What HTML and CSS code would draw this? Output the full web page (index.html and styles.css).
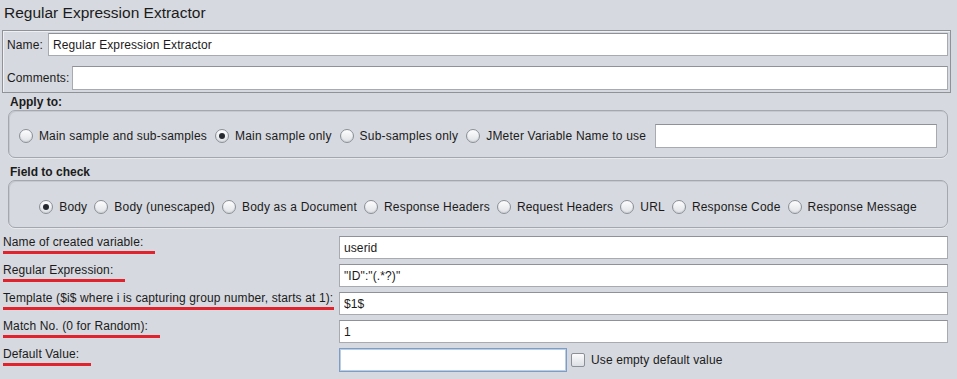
FILE: index.html
```html
<!DOCTYPE html>
<html lang="en">
<head>
    <meta charset="UTF-8">
    <title>Regular Expression Extractor</title>
    <link rel="stylesheet" href="styles.css">
</head>
<body>
    <div class="title">Regular Expression Extractor</div>

    <!-- Name / comments box -->
    <div class="name-box">
        <div class="field-row">
            <label class="name-label">Name:</label>
            <input class="text-input" type="text" value="Regular Expression Extractor">
        </div>
        <div class="field-row comments-row">
            <label class="comments-label">Comments:</label>
            <input class="text-input" type="text">
        </div>
    </div>

    <!-- Apply to -->
    <div class="group-title">Apply to:</div>
    <div class="group-panel apply-panel">
        <span class="radio-item"><span class="radio"></span>Main sample and sub-samples</span>
        <span class="radio-item"><span class="radio checked"></span>Main sample only</span>
        <span class="radio-item"><span class="radio"></span>Sub-samples only</span>
        <span class="radio-item"><span class="radio"></span>JMeter Variable Name to use</span>
        <input class="text-input var-input" type="text">
    </div>

    <!-- Field to check -->
    <div class="group-title field-title">Field to check</div>
    <div class="group-panel field-panel">
        <span class="radio-item"><span class="radio checked"></span>Body</span>
        <span class="radio-item"><span class="radio"></span>Body (unescaped)</span>
        <span class="radio-item"><span class="radio"></span>Body as a Document</span>
        <span class="radio-item"><span class="radio"></span>Response Headers</span>
        <span class="radio-item"><span class="radio"></span>Request Headers</span>
        <span class="radio-item"><span class="radio"></span>URL</span>
        <span class="radio-item"><span class="radio"></span>Response Code</span>
        <span class="radio-item"><span class="radio"></span>Response Message</span>
    </div>

    <!-- Extractor settings -->
    <div class="extract-grid">
        <div class="cell-label"><span class="marked">Name of created variable:</span></div>
        <input class="text-input" type="text" value="userid">

        <div class="cell-label"><span class="marked">Regular Expression:</span></div>
        <input class="text-input" type="text" value='"ID":"(.*?)"'>

        <div class="cell-label"><span class="marked tight">Template ($i$ where i is capturing group number, starts at 1):</span></div>
        <input class="text-input" type="text" value="$1$">

        <div class="cell-label"><span class="marked">Match No. (0 for Random):</span></div>
        <input class="text-input" type="text" value="1">

        <div class="cell-label"><span class="marked">Default Value:</span></div>
        <div class="default-row">
            <input class="text-input default-input" type="text">
            <span class="checkbox"></span>
            <span class="check-label">Use empty default value</span>
        </div>
    </div>
</body>
</html>
```

FILE: styles.css
```css
/* Swing / Nimbus look */
body {
    margin: 0;
    background: #d6d9df;
    font-family: "Liberation Sans", Arial, sans-serif;
    font-size: 12px;
    letter-spacing: 0.12px;
    color: #1b1b1b;
}

.title {
    height: 30px;
    box-sizing: border-box;
    padding: 4px 0 0 4px;
    font-size: 15.5px;
    line-height: 18px;
    letter-spacing: 0;
}

/* Text fields */
.text-input {
    box-sizing: border-box;
    height: 23px;
    margin: 0;
    padding: 0 4px;
    border: 1px solid #a7aab0;
    border-top-color: #8e9197;
    background: #fff;
    font-family: inherit;
    font-size: 12px;
    letter-spacing: 0.1px;
    color: #1b1b1b;
    outline: none;
    min-width: 0;
}

/* Name / comments box */
.name-box {
    margin: 0 6px 0 2px;
    height: 63px;
    box-sizing: border-box;
    border: 1px solid #8f9297;
    box-shadow: inset 1px 1px 0 #eef0f3;
    padding: 2px 2px 0 3px;
    display: flex;
    flex-direction: column;
    gap: 10px;
}

.field-row {
    display: flex;
    align-items: center;
}

.field-row .text-input {
    flex: 1;
}

.comments-row .text-input {
    height: 24px;
}

.name-label {
    width: 41px;
    padding-left: 1px;
}

.comments-label {
    width: 65px;
    padding-left: 1px;
}

/* Titled groups */
.group-title {
    height: 17px;
    box-sizing: border-box;
    padding: 2px 0 0 10px;
    font-weight: bold;
    line-height: 14px;
    letter-spacing: 0;
}

.field-title {
    height: 22px;
    padding-top: 7px;
}

.group-panel {
    margin: 0 9px 0 8px;
    height: 48px;
    box-sizing: border-box;
    border: 1px solid #a4a8ae;
    border-radius: 7px;
    box-shadow: inset 1px 1px 0 #c5c8ce, 0 1px 0 #e6e8ec;
    display: flex;
    justify-content: center;
    align-items: center;
    gap: 8px;
    letter-spacing: 0.2px;
}

.apply-panel {
    padding-top: 4px;
}

.field-panel {
    padding-top: 6px;
    gap: 7px;
}

.radio-item {
    display: flex;
    align-items: center;
    white-space: nowrap;
}

.radio {
    width: 14px;
    height: 14px;
    box-sizing: border-box;
    margin-right: 6px;
    border: 1px solid #8b9097;
    border-radius: 50%;
    background: linear-gradient(#fdfdfd, #dfe2e6);
    box-shadow: inset 0 -1px 1px #cfd2d7;
    display: flex;
    justify-content: center;
    align-items: center;
}

.radio.checked::after {
    content: "";
    width: 6px;
    height: 6px;
    border-radius: 50%;
    background: #262a30;
}

.var-input {
    width: 282px;
    height: 24px;
    margin-left: 1px;
}

/* Extractor settings grid */
.extract-grid {
    display: grid;
    grid-template-columns: 336px 1fr;
    row-gap: 5px;
    padding: 8px 9px 0 3px;
}

.cell-label {
    line-height: 14px;
    margin-top: -1px;
}

/* red annotation lines */
.marked {
    display: inline-block;
    padding: 0 12px 2px 0;
    border-bottom: 3px solid #e0232d;
    white-space: nowrap;
}

.marked.tight {
    padding-right: 1px;
}

.default-row {
    display: flex;
    align-items: center;
}

.default-input {
    width: 228px;
    height: 24px;
    border: 1px solid #7d9dc4;
    box-shadow: inset 0 0 0 1px #b9cde4;
}

.checkbox {
    width: 14px;
    height: 14px;
    box-sizing: border-box;
    margin-left: 4px;
    border: 1px solid #8b9097;
    border-radius: 2px;
    background: linear-gradient(#fbfbfc, #dcdfe4);
}

.check-label {
    margin-left: 6px;
}
```
